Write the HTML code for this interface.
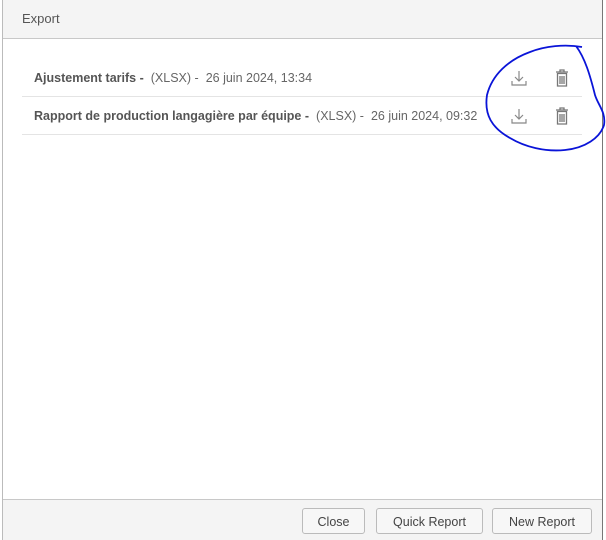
<!DOCTYPE html>
<html><head><style>
body{margin:0;width:606px;height:540px;overflow:hidden;background:#fff;font-family:"Liberation Sans",sans-serif;position:relative}
.modal{position:absolute;left:2px;top:0;width:599px;height:540px;background:#fff;border-left:1px solid #bbb;border-right:1px solid #777}
.hdr{height:38px;background:#f4f4f4;border-bottom:1px solid #c8c8c8;font-size:13px;color:#555;line-height:38px;padding-left:19px}
.row{position:absolute;left:19px;width:560px;height:37px;border-bottom:1px solid #e4e4e4;font-size:12.5px;color:#555;line-height:37px;box-sizing:border-box;padding-left:12px}
.row b{font-weight:bold;color:#555}
.row .s{color:#666;margin-left:7px}
.ic{position:absolute;top:0}
.ftr{position:absolute;left:0;right:0;top:499px;bottom:0;background:#f4f4f4;border-top:1px solid #c8c8c8}
.btn{position:absolute;top:8px;height:26px;border:1px solid #bbb;border-radius:3px;background:#f7f7f7;font-size:12.5px;color:#444;line-height:26px;text-align:center;box-sizing:border-box}
</style></head><body>
<div class="modal">
<div class="hdr">Export</div>
<div class="row" style="top:60px"><b>Ajustement tarifs -</b><span class="s">(XLSX) -</span><span class="s">26 juin 2024, 13:34</span>
<svg class="ic" style="left:488px;top:9px" width="18" height="18" viewBox="0 0 18 18" fill="none" stroke="#888" stroke-width="1.2"><path d="M9 2v10M5 8l4 4 4-4M2 12v4h14v-4"/></svg>
<svg class="ic" style="left:533px;top:9px" width="14" height="18" viewBox="0 0 14 18" fill="none" stroke="#777" stroke-width="1.3"><path d="M1 3h12M5 3V1h4v2M2.5 4.5h9V17h-9zM5 7v8M7 7v8M9 7v8"/></svg></div>
<div class="row" style="top:98px"><b>Rapport de production langagière par équipe -</b><span class="s">(XLSX) -</span><span class="s">26 juin 2024, 09:32</span>
<svg class="ic" style="left:488px;top:9px" width="18" height="18" viewBox="0 0 18 18" fill="none" stroke="#888" stroke-width="1.2"><path d="M9 2v10M5 8l4 4 4-4M2 12v4h14v-4"/></svg>
<svg class="ic" style="left:533px;top:9px" width="14" height="18" viewBox="0 0 14 18" fill="none" stroke="#777" stroke-width="1.3"><path d="M1 3h12M5 3V1h4v2M2.5 4.5h9V17h-9zM5 7v8M7 7v8M9 7v8"/></svg></div>
<div class="ftr">
<div class="btn" style="left:299px;width:63px">Close</div>
<div class="btn" style="left:373px;width:107px">Quick Report</div>
<div class="btn" style="left:489px;width:100px">New Report</div>
</div>
</div>
<svg style="position:absolute;left:0;top:0" width="606" height="540"><path d="M582 47C565 44 545 46 530 52C508 60 492 75 487 95C484 115 492 128 510 138C525 147 545 152 565 150C585 148 600 138 604 125C606 112 598 105 595 95C590 75 585 58 576 46" fill="none" stroke="#0a14d8" stroke-width="1.8"/></svg>
</body></html>
